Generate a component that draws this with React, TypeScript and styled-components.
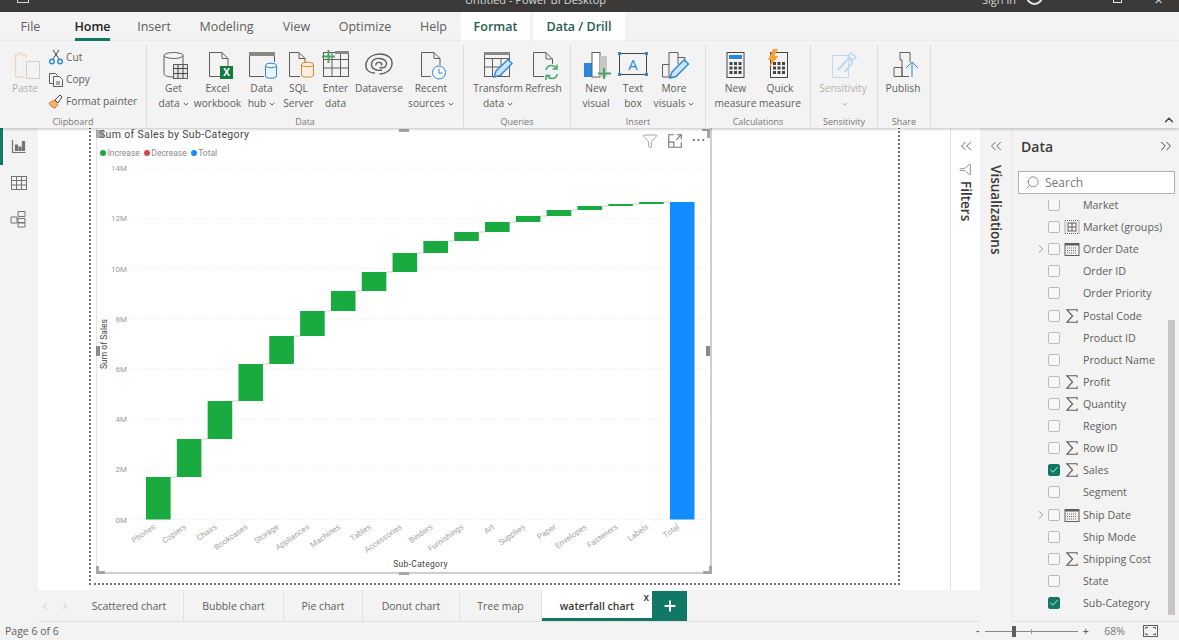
import React from 'react'
import styled, { createGlobalStyle, css } from 'styled-components'
import { Check, ChevronLeft, ChevronRight, ChevronUp, ChevronsLeft, ChevronsRight, Filter, Plus, Search } from 'lucide-react'

const GRAY = '#605e5c'
const GREEN = '#117865'
const BLUE = '#2b88d8'
const PLUS = '#4aa564'

const GlobalStyle = createGlobalStyle`
  html, body { margin: 0; padding: 0; background: #f3f3f3; }
  body { font-family: "Open Sans", "Liberation Sans", sans-serif; color: #605e5c; }
  * { box-sizing: border-box; }
`

/* ---------- ribbon icons, all on a 40x32 box ---------- */

const Svg = styled.svg.attrs<React.SVGProps<SVGSVGElement>>(p => ({
  viewBox: '0 0 40 32',
  fill: 'none',
  stroke: p.stroke ?? GRAY,
  strokeWidth: p.strokeWidth ?? 1,
}))`
  width: 40px;
  height: 32px;
  flex: none;
`

const SvgLetter = styled.text`
  font-family: "Open Sans", sans-serif;
  text-anchor: middle;
`

const GetDataIcon = () => (
  <Svg>
    <ellipse cx="19.5" cy="6.5" rx="9.5" ry="3" />
    <path d="M10 6.5V25c0 1.6 4 3 9 3M29 6.5V15" />
    <rect x="19.5" y="15.5" width="14" height="14" fill="#e6e6e6" />
    <path d="M19.5 19.5h14M19.5 24.5h14M24 15.5v14M29 15.5v14" stroke="#444" />
  </Svg>
)

const ExcelIcon = () => (
  <Svg>
    <path d="M22 27.5H11.5v-24H24l6 6V17M24 3.5v6h6" />
    <rect x="22" y="17" width="13" height="13" fill="#107c41" stroke="none" />
    <SvgLetter x="28.5" y="27" fill="#fff" fontSize="10" fontWeight="700" stroke="none">X</SvgLetter>
  </Svg>
)

const DataHubIcon = () => (
  <Svg>
    <path d="M22 27.5H7.5v-24h25V13" />
    <rect x="7" y="3" width="26" height="4" fill="#8a8886" stroke="none" />
    <path d="M23.5 16.5c0-3 11-3 11 0V27c0 3-11 3-11 0z" fill="#eaf4fb" stroke={BLUE} />
    <path d="M23.5 16.5c0 3 11 3 11 0" stroke={BLUE} />
  </Svg>
)

const SqlIcon = () => (
  <Svg>
    <path d="M21 27.5H10.5v-24H20l6 6V13M20 3.5v6h6" />
    <path d="M22.5 15.5c0-3 12-3 12 0V26c0 3-12 3-12 0z" fill="#fdf0e2" stroke="#d9822b" />
    <path d="M22.5 15.5c0 3 12 3 12 0" stroke="#d9822b" />
  </Svg>
)

const EnterDataIcon = () => (
  <Svg>
    <rect x="7.5" y="3.5" width="25" height="24" />
    <path d="M7.5 10.5h25M7.5 19h25M16 3.5v24M24.5 3.5v24" />
    <rect x="19" y="2" width="14" height="3" fill="#8a8886" stroke="none" />
    <path d="M12.5 1v13M6 7.5h13" stroke={PLUS} strokeWidth="2" />
  </Svg>
)

const DataverseIcon = () => (
  <Svg strokeWidth="1.4">
    <path d="M16 24C9 24 6 19.5 7 14.5C8.5 8.5 14 5 21 5C28.5 5 33.5 9 33 15C32.5 21 27 25 20.5 25" />
    <path d="M23 21C17 22.5 12 19.5 12.5 14.5C13 10.5 17 9 21 9.5C25.5 10 28 12.5 27.5 15.5C27 18.5 23.5 19.5 20.5 18.5" />
    <path d="M17 16.5C16.5 14 18.5 13 21 13.5C23 14 23.5 15.5 22 16.5" />
  </Svg>
)

const RecentIcon = () => (
  <Svg>
    <path d="M20 27.5H10.5v-24H23l6 6V16M23 3.5v6h6" />
    <circle cx="28" cy="23.5" r="6.5" fill="#fff" stroke={BLUE} />
    <path d="M28 19.5V24h3.5" stroke={BLUE} />
  </Svg>
)

const TransformIcon = () => (
  <Svg>
    <rect x="6.5" y="3.5" width="25" height="24" />
    <path d="M6.5 9.5h25M6.5 18h25M14.5 9.5v18M23 9.5v18" />
    <rect x="6" y="3" width="26" height="3" fill="#8a8886" stroke="none" />
    <path d="M16 28l2-6L30 10.5l4 4L22 26.5z" fill="#cfe4f7" stroke={BLUE} strokeWidth="1.4" />
  </Svg>
)

const RefreshIcon = () => (
  <Svg>
    <path d="M20 27.5H9.5v-24H22l6.500 6.500v5M22 3.500V10h6.500" />
    <path d="M22 21c.8-3 3-4.500 5.500-4.500 2 0 3.500 1 4.500 2.500M33.500 25c-.8 3-3 4.500-5.500 4.500-2 0-3.500-1-4.500-2.500" stroke={PLUS} strokeWidth="1.5" />
    <path d="M33 15.500V20h-4.500M22 31v-4.500h4.500" stroke={PLUS} strokeWidth="1.5" />
  </Svg>
)

const NewVisualIcon = () => (
  <Svg>
    <rect x="8" y="14" width="8" height="14" fill={BLUE} stroke="none" />
    <rect x="16" y="3.5" width="8" height="24.5" fill="#fff" />
    <rect x="24" y="7" width="7" height="21" fill="#c8c6c4" stroke="none" />
    <path d="M28 19v11M22 24.500h13" stroke={PLUS} strokeWidth="2" />
  </Svg>
)

const TextBoxIcon = () => (
  <Svg>
    <rect x="6.5" y="4.5" width="27" height="21" stroke="#444" />
    <path d="M5 3h3v3H5zM32 3h3v3h-3zM5 24h3v3H5zM32 24h3v3h-3z" fill={BLUE} stroke="none" />
    <SvgLetter x="20" y="21" fill={BLUE} fontSize="15" stroke="none">A</SvgLetter>
  </Svg>
)

const MoreVisualsIcon = () => (
  <Svg>
    <path d="M8.500 28V15.500H15M15 28V3.500h9v12M24 8.500h7v9" />
    <path d="M8.500 28H19" />
    <path d="M16 29l2-6L30 11l4.500 4L22 27.500z" fill="#cfe4f7" stroke={BLUE} strokeWidth="1.4" />
  </Svg>
)

const Keys = styled.g`
  fill: #444;
  stroke: none;
`

const CalcBody = ({ x }: { x: number }) => (
  <g>
    <rect x={x + 0.5} y="3.5" width="17" height="25" stroke="#444" fill="#f3f3f3" />
    <Keys>
      {[0, 1, 2].flatMap(r =>
        [0, 1, 2].map(c => <rect key={`${r}${c}`} x={x + 3 + c * 4.5} y={13 + r * 4.5} width="3" height="3" />)
      )}
    </Keys>
  </g>
)

const NewMeasureIcon = () => (
  <Svg>
    <CalcBody x={10.5} />
    <rect x="13" y="6" width="13" height="4" fill={BLUE} stroke="none" />
  </Svg>
)

const QuickMeasureIcon = () => (
  <Svg>
    <CalcBody x={10} />
    <path d="M13 0h5l-3.500 7h4L9 19l2.500-8H8z" fill="#f2a33a" stroke="none" />
  </Svg>
)

const SensitivityIcon = () => (
  <Svg stroke="#bcd9ee">
    <path d="M9.500 6.500h16v22h-16z" />
    <path d="M15 21l9-10a3 3 0 0 1 5 3l-7 9" strokeWidth="2" />
    <path d="M28 4l5 4-3 3-5-4z" strokeWidth="1.5" />
  </Svg>
)

const PublishIcon = () => (
  <Svg>
    <path d="M11 27.500v-9h8v9zM19 27.500V11h-2V3.500h10V13M19 27.500h7" />
    <path d="M29 28V13M23 19l6-6 6 6" stroke={BLUE} />
  </Svg>
)

const PasteIcon = () => (
  <Svg stroke="#edd9c3">
    <path d="M21 9V6h-3.500c0-3-4-3-4 0H10.500v22h9" strokeWidth="1.5" />
    <rect x="21.5" y="12.5" width="13" height="17" stroke="#d2d0ce" />
  </Svg>
)

const Small = styled.svg.attrs<React.SVGProps<SVGSVGElement>>(p => ({
  viewBox: p.viewBox ?? '0 0 16 16',
  fill: 'none',
  stroke: p.stroke ?? GRAY,
}))`
  width: 16px;
  height: 16px;
  flex: none;
`

const CutIcon = () => (
  <Small>
    <path d="M5 1l6 9M11 1l-6 9" stroke="#444" />
    <circle cx="4" cy="12.5" r="2.3" stroke={BLUE} strokeWidth="1.4" />
    <circle cx="12" cy="12.5" r="2.3" stroke={BLUE} strokeWidth="1.4" />
  </Small>
)

const CopyIcon = () => (
  <Small>
    <path d="M5 12.500H1.500v-10h6l2 2" />
    <path d="M5.500 5.500h6l3 3v7h-9z" fill="#f3f3f3" />
    <path d="M8 11h4M8 13h4" />
  </Small>
)

const PainterIcon = () => (
  <Small>
    <path d="M1 10l5-3 4 5-3 3C5 15 2 13 1 10z" fill="#f2b36b" stroke="#d9822b" />
    <path d="M7 7l5-5 2 2-4 6z" fill="#fff" stroke="#444" />
  </Small>
)

/* ---------- title bar ---------- */

const TitleBar = styled.div`
  height: 12px;
  flex: none;
  background: #3b3a39;
  overflow: hidden;
  display: grid;
  grid-template-columns: 465px 517px 44px 83px 45px 1fr;
  font-size: 11px;
  line-height: 12px;
  color: #d8d8d8;
`

const TitleText = styled.div`
  margin-top: -6px;
`

const TitleGlyphs = styled.div`
  height: 3px;
  display: flex;
  align-items: flex-end;
  gap: 12px;
  padding-left: 17px;
  color: #d8d8d8;
`

const HomeGlyph = styled.div`
  width: 12px;
  height: 10px;
  flex: none;
  border: 1px solid #d8d8d8;
`

const Avatar = styled.div`
  width: 17px;
  height: 17px;
  border: 2.5px solid #e6e6e6;
  border-radius: 50%;
  margin-top: -12px;
`

const WinGlyph = styled.div`
  width: 9px;
  height: 9px;
  border: 1px solid #e6e6e6;
  margin: -6px 0 0 4px;
`

/* ---------- tabs row and ribbon ---------- */

const TabRow = styled.div`
  height: 29px;
  flex: none;
  display: flex;
  background: #f3f3f3;
`

const RibbonTab = styled.div<{ $w: number; $active?: boolean; $context?: boolean }>`
  width: ${p => p.$w}px;
  flex: none;
  display: flex;
  justify-content: center;
  align-items: center;
  font-size: 12.5px;
  position: relative;
  ${p => p.$active && css`
    color: #252423;
    font-weight: 600;
    &::after {
      content: '';
      position: absolute;
      bottom: 0;
      left: 14px;
      right: 14px;
      height: 3px;
      background: ${GREEN};
    }
  `}
  ${p => p.$context && css`
    background: #fff;
    color: #1f5c50;
    font-weight: 600;
    margin-right: 3px;
  `}
`

const Ribbon = styled.div`
  height: 87px;
  flex: none;
  display: flex;
  background: #f3f3f3;
  position: relative;
  z-index: 2;
  box-shadow: 0 1px 3px rgba(0, 0, 0, 0.25);
  padding-top: 4px;
`

const Group = styled.div<{ $w: number; $pad?: number }>`
  width: ${p => p.$w}px;
  flex: none;
  display: flex;
  flex-direction: column;
  border-right: 1px solid #dcdcdc;
  margin-bottom: 1px;
  padding-left: ${p => p.$pad ?? 0}px;
`

const GroupBody = styled.div`
  height: 71px;
  display: flex;
`

const GroupLabel = styled.div<{ $pad?: number }>`
  height: 11px;
  line-height: 12px;
  font-size: 9px;
  text-align: center;
  color: #797775;
  margin-left: ${p => -(p.$pad ?? 0)}px;
`

const Btn = styled.div<{ $w: number; $off?: boolean }>`
  width: ${p => p.$w}px;
  flex: none;
  display: flex;
  flex-direction: column;
  align-items: center;
  padding-top: 4px;
  font-size: 10.2px;
  line-height: 15px;
  white-space: nowrap;
  color: ${p => (p.$off ? '#b3b0ad' : GRAY)};
`

const BtnText = styled.span`
  text-align: center;
`

const Caret = styled.svg.attrs({ viewBox: '0 0 8 5', fill: 'none', stroke: 'currentColor' })`
  width: 6px;
  height: 4px;
  margin-left: 3px;
  vertical-align: 1px;
  stroke-width: 1.3;
`

const Down = () => (
  <Caret>
    <path d="M1 1l3 3 3-3" />
  </Caret>
)

const PasteBtn = styled(Btn)`
  margin-left: 6px;
`

const ClipList = styled.div`
  display: flex;
  flex-direction: column;
  gap: 6px;
  padding: 4px 0 0 4px;
`

const ClipRow = styled.div`
  display: flex;
  align-items: center;
  gap: 2px;
  height: 16px;
  font-size: 10.2px;
  white-space: nowrap;
`

const CollapseRibbon = styled.div`
  position: absolute;
  right: 3px;
  bottom: 1px;
  display: flex;
  color: #444;
`

/* ---------- main area ---------- */

const Shell = styled.div`
  width: 1179px;
  height: 640px;
  overflow: hidden;
  display: flex;
  flex-direction: column;
  background: #f3f3f3;
`

const Main = styled.div`
  flex: 1;
  min-height: 0;
  display: flex;
`

const Rail = styled.div`
  width: 38px;
  flex: none;
`

const RailItem = styled.div<{ $active?: boolean }>`
  height: 36.5px;
  display: flex;
  align-items: center;
  justify-content: center;
  border-left: 3px solid ${p => (p.$active ? GREEN : 'transparent')};
  padding-right: 3px;
`

const RailSvg = styled.svg.attrs({ viewBox: '0 0 18 18', fill: 'none', stroke: '#737373' })`
  width: 18px;
  height: 18px;
`

const Center = styled.div`
  width: 942px;
  flex: none;
  display: flex;
  flex-direction: column;
`

const Upper = styled.div`
  height: 462px;
  flex: none;
  display: flex;
  background: #fff;
`

const Canvas = styled.div`
  width: 912px;
  flex: none;
  padding-left: 51px;
  overflow: hidden;
`

const Page = styled.div`
  width: 811px;
  height: 463px;
  margin-top: -6px;
  border: 2px dotted #6e6e6e;
  padding: 3px 0 0 5px;
`

const Visual = styled.div`
  width: 616px;
  height: 446px;
  position: relative;
  background: #fff;
  border-left: 1px solid #e4e4e4;
  border-right: 2px solid #cfcfcf;
  border-bottom: 2px solid #cfcfcf;
`

const ChartTitle = styled.div`
  height: 14px;
  line-height: 14px;
  margin-top: 1px;
  padding-left: 2px;
  font-family: Roboto, sans-serif;
  font-size: 10.5px;
  letter-spacing: 0.35px;
  color: #444;
`

const Legend = styled.div`
  display: flex;
  align-items: center;
  height: 12px;
  margin-top: 5px;
  padding-left: 3px;
  font-family: Roboto, sans-serif;
  font-size: 8.5px;
  color: #8a8a8a;
`

const LegendItem = styled.span<{ $color: string }>`
  display: flex;
  align-items: center;
  gap: 1.5px;
  margin-right: 4px;
  &::before {
    content: '';
    width: 6px;
    height: 6px;
    border-radius: 50%;
    background: ${p => p.$color};
  }
`

const VisualTools = styled.div`
  position: absolute;
  top: 5px;
  right: 4px;
  display: flex;
  align-items: center;
  gap: 9px;
  color: #777;
`

const ToolDots = styled.div`
  font-size: 13px;
  line-height: 10px;
  letter-spacing: 1px;
  font-weight: 700;
  margin-top: -4px;
`

const handleSpots: Record<string, ReturnType<typeof css>> = {
  tl: css`top: 2px; left: -1px; width: 8px; height: 8px; background: rgba(120, 120, 120, 0.6);`,
  tm: css`top: 1px; left: 302px; width: 10px; height: 3px; background: #a6a6a6;`,
  tr: css`top: 1px; right: 0; width: 8px; height: 9px; border-top: 2px solid #a6a6a6; border-right: 3px solid #a6a6a6;`,
  lm: css`top: 218px; left: -1px; width: 4px; height: 10px; background: #8a8a8a;`,
  rm: css`top: 218px; right: 0; width: 4px; height: 10px; background: #8a8a8a;`,
  bl: css`bottom: -2px; left: -1px; width: 9px; height: 8px; border-left: 3px solid #a6a6a6; border-bottom: 3px solid #a6a6a6;`,
  bm: css`bottom: -3px; left: 302px; width: 10px; height: 3px; background: #a6a6a6;`,
  br: css`bottom: -2px; right: -2px; width: 9px; height: 8px; border-right: 3px solid #a6a6a6; border-bottom: 3px solid #a6a6a6;`,
}

const Handle = styled.i<{ $at: string }>`
  position: absolute;
  ${p => handleSpots[p.$at]}
`

const Plot = styled.svg`
  display: block;
  width: 614px;
  height: 412px;
  margin-top: 1px;
  margin-left: -1px;
  font-family: Roboto, sans-serif;
`

const Filters = styled.div`
  width: 30px;
  flex: none;
  border-left: 1px solid #e1e1e1;
  background: #fff;
`

const PaneStrip = styled.div`
  display: flex;
  flex-direction: column;
  align-items: center;
  padding-top: 9px;
  color: ${GRAY};
`

const VerticalLabel = styled.div<{ $top: number }>`
  writing-mode: vertical-rl;
  margin-top: ${p => p.$top}px;
  font-size: 13.5px;
  line-height: 16px;
  font-weight: 600;
  color: #3b3a39;
`

const TurnedFilter = styled(Filter)`
  margin-top: 8px;
  transform: rotate(90deg);
`

const SheetTabs = styled.div`
  height: 32px;
  flex: none;
  display: flex;
  border-bottom: 1px solid #e1e1e1;
  font-size: 10.5px;
`

const SheetNav = styled.div`
  width: 37px;
  flex: none;
  display: flex;
  align-items: center;
  justify-content: space-between;
  padding: 0 4px 0 1px;
  color: #c8c6c4;
`

const SheetTab = styled.div<{ $w: number; $active?: boolean }>`
  width: ${p => p.$w}px;
  flex: none;
  display: flex;
  align-items: center;
  justify-content: center;
  position: relative;
  border-right: 1px solid #e1e1e1;
  ${p => p.$active && css`
    background: #fff;
    border-right: none;
    border-bottom: 3px solid ${GREEN};
    font-weight: 600;
    color: #3b3a39;
    padding-top: 3px;
  `}
`

const SheetClose = styled.span`
  position: absolute;
  top: 0;
  right: 3px;
  font-size: 10px;
  line-height: 14px;
  font-weight: 600;
`

const AddSheet = styled.div`
  width: 35px;
  height: 30px;
  margin-top: 1px;
  background: ${GREEN};
  color: #fff;
  display: flex;
  align-items: center;
  justify-content: center;
`

const VizPane = styled(PaneStrip)`
  width: 33px;
  flex: none;
  border-right: 1px solid #e6e6e6;
`

const DataPane = styled.div`
  flex: 1;
  min-width: 0;
  display: flex;
  flex-direction: column;
  border-bottom: 1px solid #e1e1e1;
`

const DataHead = styled.div`
  height: 36px;
  flex: none;
  display: flex;
  align-items: center;
  justify-content: space-between;
  padding: 0 4px 0 8px;
  font-size: 14px;
  font-weight: 600;
  color: #3b3a39;
`

const SearchBox = styled.div`
  height: 23px;
  flex: none;
  margin: 7px 4px 6px 5px;
  display: flex;
  align-items: center;
  gap: 5px;
  padding-left: 6px;
  background: #fff;
  border: 1px solid #b3b0ad;
  font-size: 12px;
  color: #797775;
`

const FlippedSearch = styled(Search)`
  transform: scaleX(-1);
`

const FieldList = styled.div`
  flex: 1;
  min-height: 0;
  overflow: hidden;
  position: relative;
`

const FieldRows = styled.div`
  margin-top: -6px;
`

const FieldRow = styled.div`
  height: 22.11px;
  display: flex;
  align-items: center;
  padding-left: 21px;
  font-size: 10.7px;
  color: #605e5c;
`

const Expander = styled.div`
  width: 14px;
  flex: none;
  display: flex;
  color: #797775;
`

const Box = styled.div<{ $on?: boolean }>`
  width: 12px;
  height: 12px;
  flex: none;
  display: flex;
  align-items: center;
  justify-content: center;
  border-radius: 2px;
  border: 1px solid ${p => (p.$on ? GREEN : '#bdbbb9')};
  background: ${p => (p.$on ? GREEN : '#f8f8f8')};
  color: #fff;
`

const FieldGlyph = styled.div`
  width: 23px;
  flex: none;
  display: flex;
  justify-content: center;
`

const ListScroll = styled.div`
  position: absolute;
  top: 120px;
  right: 4px;
  width: 7px;
  height: 295px;
  background: #c8c6c4;
`

/* ---------- status bar ---------- */

const StatusBar = styled.div`
  height: 18px;
  flex: none;
  display: flex;
  align-items: center;
  padding: 0 21px 0 5px;
  font-size: 10.5px;
  color: #605e5c;
`

const Zoomer = styled.div`
  margin-left: auto;
  display: flex;
  align-items: center;
`

const ZoomSign = styled.span`
  width: 7px;
  text-align: center;
  font-weight: 600;
`

const ZoomTrack = styled.div`
  width: 93px;
  height: 1px;
  background: #8a8886;
  position: relative;
  margin: 0 4px;
`

const ZoomThumb = styled.i`
  position: absolute;
  left: 27px;
  top: -5px;
  width: 4px;
  height: 11px;
  background: #605e5c;
`

const ZoomTick = styled.i`
  position: absolute;
  left: 46px;
  top: -2px;
  width: 1px;
  height: 5px;
  background: #a19f9d;
`

const ZoomValue = styled.span`
  margin: 0 18px 0 15px;
  color: #797775;
`

const FitIcon = styled.svg.attrs({ viewBox: '0 0 15 12', fill: 'none', stroke: '#605e5c' })`
  width: 15px;
  height: 12px;
`

/* ---------- data ---------- */

const bars: [string, number, number][] = [
  ['Phones', 477, 519.5],
  ['Copiers', 439, 477],
  ['Chairs', 401, 439],
  ['Bookcases', 364, 401],
  ['Storage', 336, 364],
  ['Appliances', 311, 336],
  ['Machines', 291, 311],
  ['Tables', 272, 291],
  ['Accessories', 253, 272],
  ['Binders', 241, 253],
  ['Furnishings', 232, 241],
  ['Art', 222, 232],
  ['Supplies', 216, 222],
  ['Paper', 210, 216],
  ['Envelopes', 206, 210],
  ['Fasteners', 204, 206],
  ['Labels', 202, 204],
  ['Total', 202, 519.5],
]

type Field = { name: string; kind?: 'sum' | 'cal' | 'group'; tree?: boolean; on?: boolean }

const fields: Field[] = [
  { name: 'Market' },
  { name: 'Market (groups)', kind: 'group' },
  { name: 'Order Date', kind: 'cal', tree: true },
  { name: 'Order ID' },
  { name: 'Order Priority' },
  { name: 'Postal Code', kind: 'sum' },
  { name: 'Product ID' },
  { name: 'Product Name' },
  { name: 'Profit', kind: 'sum' },
  { name: 'Quantity', kind: 'sum' },
  { name: 'Region' },
  { name: 'Row ID', kind: 'sum' },
  { name: 'Sales', kind: 'sum', on: true },
  { name: 'Segment' },
  { name: 'Ship Date', kind: 'cal', tree: true },
  { name: 'Ship Mode' },
  { name: 'Shipping Cost', kind: 'sum' },
  { name: 'State' },
  { name: 'Sub-Category', on: true },
]

const sheets: [string, number][] = [
  ['Scattered chart', 109],
  ['Bubble chart', 100],
  ['Pie chart', 79],
  ['Donut chart', 97],
  ['Tree map', 82],
]

const FieldIcon = ({ kind }: { kind?: Field['kind'] }) => {
  if (kind === 'sum') {
    return (
      <Small viewBox="0 0 14 14">
        <path d="M11.5 3V1.5h-9L7.500 7l-5 5.500h9V11" />
      </Small>
    )
  }
  if (kind === 'cal') {
    return (
      <Small>
        <rect x="1" y="2.5" width="14" height="12" />
        <rect x="1" y="2" width="14" height="2.5" fill={GRAY} stroke="none" />
        <path d="M3 7h10M3 9.500h10M3 12h10" strokeDasharray="1 1" />
      </Small>
    )
  }
  if (kind === 'group') {
    return (
      <Small>
        <rect x="1" y="1.5" width="14" height="13" strokeDasharray="1 1" />
        <rect x="4" y="4" width="8" height="8" />
        <path d="M8 4v8M4 8h8" />
      </Small>
    )
  }
  return null
}

const App = () => {
  return (
    <Shell>
      <GlobalStyle />
      <TitleBar>
        <TitleGlyphs>
          <HomeGlyph />
          <ChevronRight size={14} />
          <ChevronLeft size={14} color="#8a8886" />
        </TitleGlyphs>
        <TitleText>Untitled - Power BI Desktop</TitleText>
        <TitleText>Sign in</TitleText>
        <Avatar />
        <WinGlyph />
        <TitleText>✕</TitleText>
      </TitleBar>

      <TabRow>
        <RibbonTab $w={61}>File</RibbonTab>
        <RibbonTab $w={63} $active>Home</RibbonTab>
        <RibbonTab $w={60}>Insert</RibbonTab>
        <RibbonTab $w={85}>Modeling</RibbonTab>
        <RibbonTab $w={55}>View</RibbonTab>
        <RibbonTab $w={82}>Optimize</RibbonTab>
        <RibbonTab $w={55}>Help</RibbonTab>
        <RibbonTab $w={69} $context>Format</RibbonTab>
        <RibbonTab $w={92} $context>Data / Drill</RibbonTab>
      </TabRow>

      <Ribbon>
        <Group $w={147}>
          <GroupBody>
            <PasteBtn $w={38} $off>
              <PasteIcon />
              <BtnText>Paste</BtnText>
            </PasteBtn>
            <ClipList>
              <ClipRow><CutIcon />Cut</ClipRow>
              <ClipRow><CopyIcon />Copy</ClipRow>
              <ClipRow><PainterIcon />Format painter</ClipRow>
            </ClipList>
          </GroupBody>
          <GroupLabel>Clipboard</GroupLabel>
        </Group>

        <Group $w={317} $pad={8}>
          <GroupBody>
            <Btn $w={37}><GetDataIcon /><BtnText>Get<br />data<Down /></BtnText></Btn>
            <Btn $w={51}><ExcelIcon /><BtnText>Excel<br />workbook</BtnText></Btn>
            <Btn $w={37}><DataHubIcon /><BtnText>Data<br />hub<Down /></BtnText></Btn>
            <Btn $w={37}><SqlIcon /><BtnText>SQL<br />Server</BtnText></Btn>
            <Btn $w={37}><EnterDataIcon /><BtnText>Enter<br />data</BtnText></Btn>
            <Btn $w={50}><DataverseIcon /><BtnText>Dataverse</BtnText></Btn>
            <Btn $w={54}><RecentIcon /><BtnText>Recent<br />sources<Down /></BtnText></Btn>
          </GroupBody>
          <GroupLabel $pad={8}>Data</GroupLabel>
        </Group>

        <Group $w={107} $pad={8}>
          <GroupBody>
            <Btn $w={52}><TransformIcon /><BtnText>Transform<br />data<Down /></BtnText></Btn>
            <Btn $w={39}><RefreshIcon /><BtnText>Refresh</BtnText></Btn>
          </GroupBody>
          <GroupLabel $pad={8}>Queries</GroupLabel>
        </Group>

        <Group $w={135} $pad={9}>
          <GroupBody>
            <Btn $w={32}><NewVisualIcon /><BtnText>New<br />visual</BtnText></Btn>
            <Btn $w={42}><TextBoxIcon /><BtnText>Text<br />box</BtnText></Btn>
            <Btn $w={40}><MoreVisualsIcon /><BtnText>More<br />visuals<Down /></BtnText></Btn>
          </GroupBody>
          <GroupLabel $pad={9}>Insert</GroupLabel>
        </Group>

        <Group $w={105} $pad={8}>
          <GroupBody>
            <Btn $w={43}><NewMeasureIcon /><BtnText>New<br />measure</BtnText></Btn>
            <Btn $w={46}><QuickMeasureIcon /><BtnText>Quick<br />measure</BtnText></Btn>
          </GroupBody>
          <GroupLabel $pad={8}>Calculations</GroupLabel>
        </Group>

        <Group $w={67}>
          <GroupBody>
            <Btn $w={64} $off><SensitivityIcon /><BtnText>Sensitivity<br /><Down /></BtnText></Btn>
          </GroupBody>
          <GroupLabel>Sensitivity</GroupLabel>
        </Group>

        <Group $w={53}>
          <GroupBody>
            <Btn $w={50}><PublishIcon /><BtnText>Publish</BtnText></Btn>
          </GroupBody>
          <GroupLabel>Share</GroupLabel>
        </Group>

        <CollapseRibbon><ChevronUp size={14} strokeWidth={2.5} /></CollapseRibbon>
      </Ribbon>

      <Main>
        <Rail>
          <RailItem $active>
            <RailSvg strokeWidth="1.2">
              <path d="M2.500 3v12.500h13" />
              <path d="M5.500 13.500V8h2v5.500zM9 13.500V10h2v3.500zM12.500 13.500V4.500h2v9z" fill="#737373" />
            </RailSvg>
          </RailItem>
          <RailItem>
            <RailSvg>
              <rect x="1.5" y="2.5" width="15" height="13" />
              <path d="M1.500 6.500h15M1.500 11h15M6.500 2.500v13M11.500 2.500v13" />
            </RailSvg>
          </RailItem>
          <RailItem>
            <RailSvg>
              <path d="M1 7h6v6H1zM8 1.500h7v5H8zM8 8.500h7v4H8zM8 13h7v4H8z" />
              <path d="M7 9h1" />
            </RailSvg>
          </RailItem>
        </Rail>

        <Center>
          <Upper>
            <Canvas>
              <Page>
                <Visual>
                  <ChartTitle>Sum of Sales by Sub-Category</ChartTitle>
                  <Legend>
                    <LegendItem $color="#1aab40">Increase</LegendItem>
                    <LegendItem $color="#d64550">Decrease</LegendItem>
                    <LegendItem $color="#118dff">Total</LegendItem>
                  </Legend>
                  <Plot viewBox="96 160 614 412">
                    {[0, 2, 4, 6, 8, 10, 12, 14].map(v => {
                      const y = 519.5 - v * 25.1
                      return (
                        <g key={v}>
                          <line x1="132" x2="706" y1={y} y2={y} stroke="#e6e6e6" strokeDasharray="1 2" />
                          <text x="127" y={y + 3} textAnchor="end" fontSize="8" fill="#9a9a9a">{v}M</text>
                        </g>
                      )
                    })}
                    {bars.map(([name, top, bottom], i) => {
                      const x = 146 + i * 30.82
                      const total = name === 'Total'
                      return (
                        <g key={name}>
                          {i < bars.length - 1 && (
                            <line x1={x + 24.5} x2={x + 30.82} y1={top} y2={top} stroke="#d0d0d0" />
                          )}
                          <rect x={x} y={top} width="24.6" height={bottom - top} fill={total ? '#118dff' : '#1aab40'} />
                          <text
                            x={x + 10}
                            y={528}
                            textAnchor="end"
                            fontSize="8"
                            fill="#a6a6a6"
                            transform={`rotate(-35 ${x + 10} 528)`}
                          >
                            {name}
                          </text>
                        </g>
                      )
                    })}
                    <text x="106.5" y="344" textAnchor="middle" fontSize="8.5" fill="#444" transform="rotate(-90 106.5 344)">Sum of Sales</text>
                    <text x="420.5" y="567" textAnchor="middle" fontSize="8.5" letterSpacing="0.3" fill="#444">Sub-Category</text>
                  </Plot>
                  <VisualTools>
                    <Filter size={16} strokeWidth={1} />
                    <Small viewBox="0 0 14 14" stroke="#777">
                      <path d="M6 1.500H1.500v11h11V8M1.500 8H6v4.500M8.500 1.500h4v4M12.500 1.500L8 6" />
                    </Small>
                    <ToolDots>···</ToolDots>
                  </VisualTools>
                  {['tl', 'tm', 'tr', 'lm', 'rm', 'bl', 'bm', 'br'].map(at => (
                    <Handle key={at} $at={at} />
                  ))}
                </Visual>
              </Page>
            </Canvas>
            <Filters>
              <PaneStrip>
                <ChevronsLeft size={18} strokeWidth={1.25} />
                <TurnedFilter size={13} strokeWidth={1.25} />
                <VerticalLabel $top={5}>Filters</VerticalLabel>
              </PaneStrip>
            </Filters>
          </Upper>

          <SheetTabs>
            <SheetNav>
              <ChevronLeft size={12} />
              <ChevronRight size={12} />
            </SheetNav>
            {sheets.map(([name, w]) => (
              <SheetTab key={name} $w={w}>{name}</SheetTab>
            ))}
            <SheetTab $w={110} $active>
              waterfall chart
              <SheetClose>x</SheetClose>
            </SheetTab>
            <AddSheet><Plus size={16} strokeWidth={3} /></AddSheet>
          </SheetTabs>
        </Center>

        <VizPane>
          <ChevronsLeft size={18} strokeWidth={1.25} />
          <VerticalLabel $top={10}>Visualizations</VerticalLabel>
        </VizPane>

        <DataPane>
          <DataHead>
            Data
            <ChevronsRight size={18} strokeWidth={1.25} />
          </DataHead>
          <SearchBox>
            <FlippedSearch size={15} strokeWidth={1.25} />
            Search
          </SearchBox>
          <FieldList>
            <FieldRows>
              {fields.map(f => (
                <FieldRow key={f.name}>
                  <Expander>{f.tree && <ChevronRight size={14} strokeWidth={1.25} />}</Expander>
                  <Box $on={f.on}>{f.on && <Check size={10} strokeWidth={2} />}</Box>
                  <FieldGlyph><FieldIcon kind={f.kind} /></FieldGlyph>
                  {f.name}
                </FieldRow>
              ))}
            </FieldRows>
            <ListScroll />
          </FieldList>
        </DataPane>
      </Main>

      <StatusBar>
        Page 6 of 6
        <Zoomer>
          <ZoomSign>-</ZoomSign>
          <ZoomTrack>
            <ZoomThumb />
            <ZoomTick />
          </ZoomTrack>
          <ZoomSign>+</ZoomSign>
          <ZoomValue>68%</ZoomValue>
          <FitIcon>
            <rect x="0.5" y="0.5" width="14" height="11" />
            <path d="M2.500 4V2.500H5M10 2.500h2.500V4M12.500 8v1.500H10M5 9.500H2.500V8" />
          </FitIcon>
        </Zoomer>
      </StatusBar>
    </Shell>
  )
}

export default App
